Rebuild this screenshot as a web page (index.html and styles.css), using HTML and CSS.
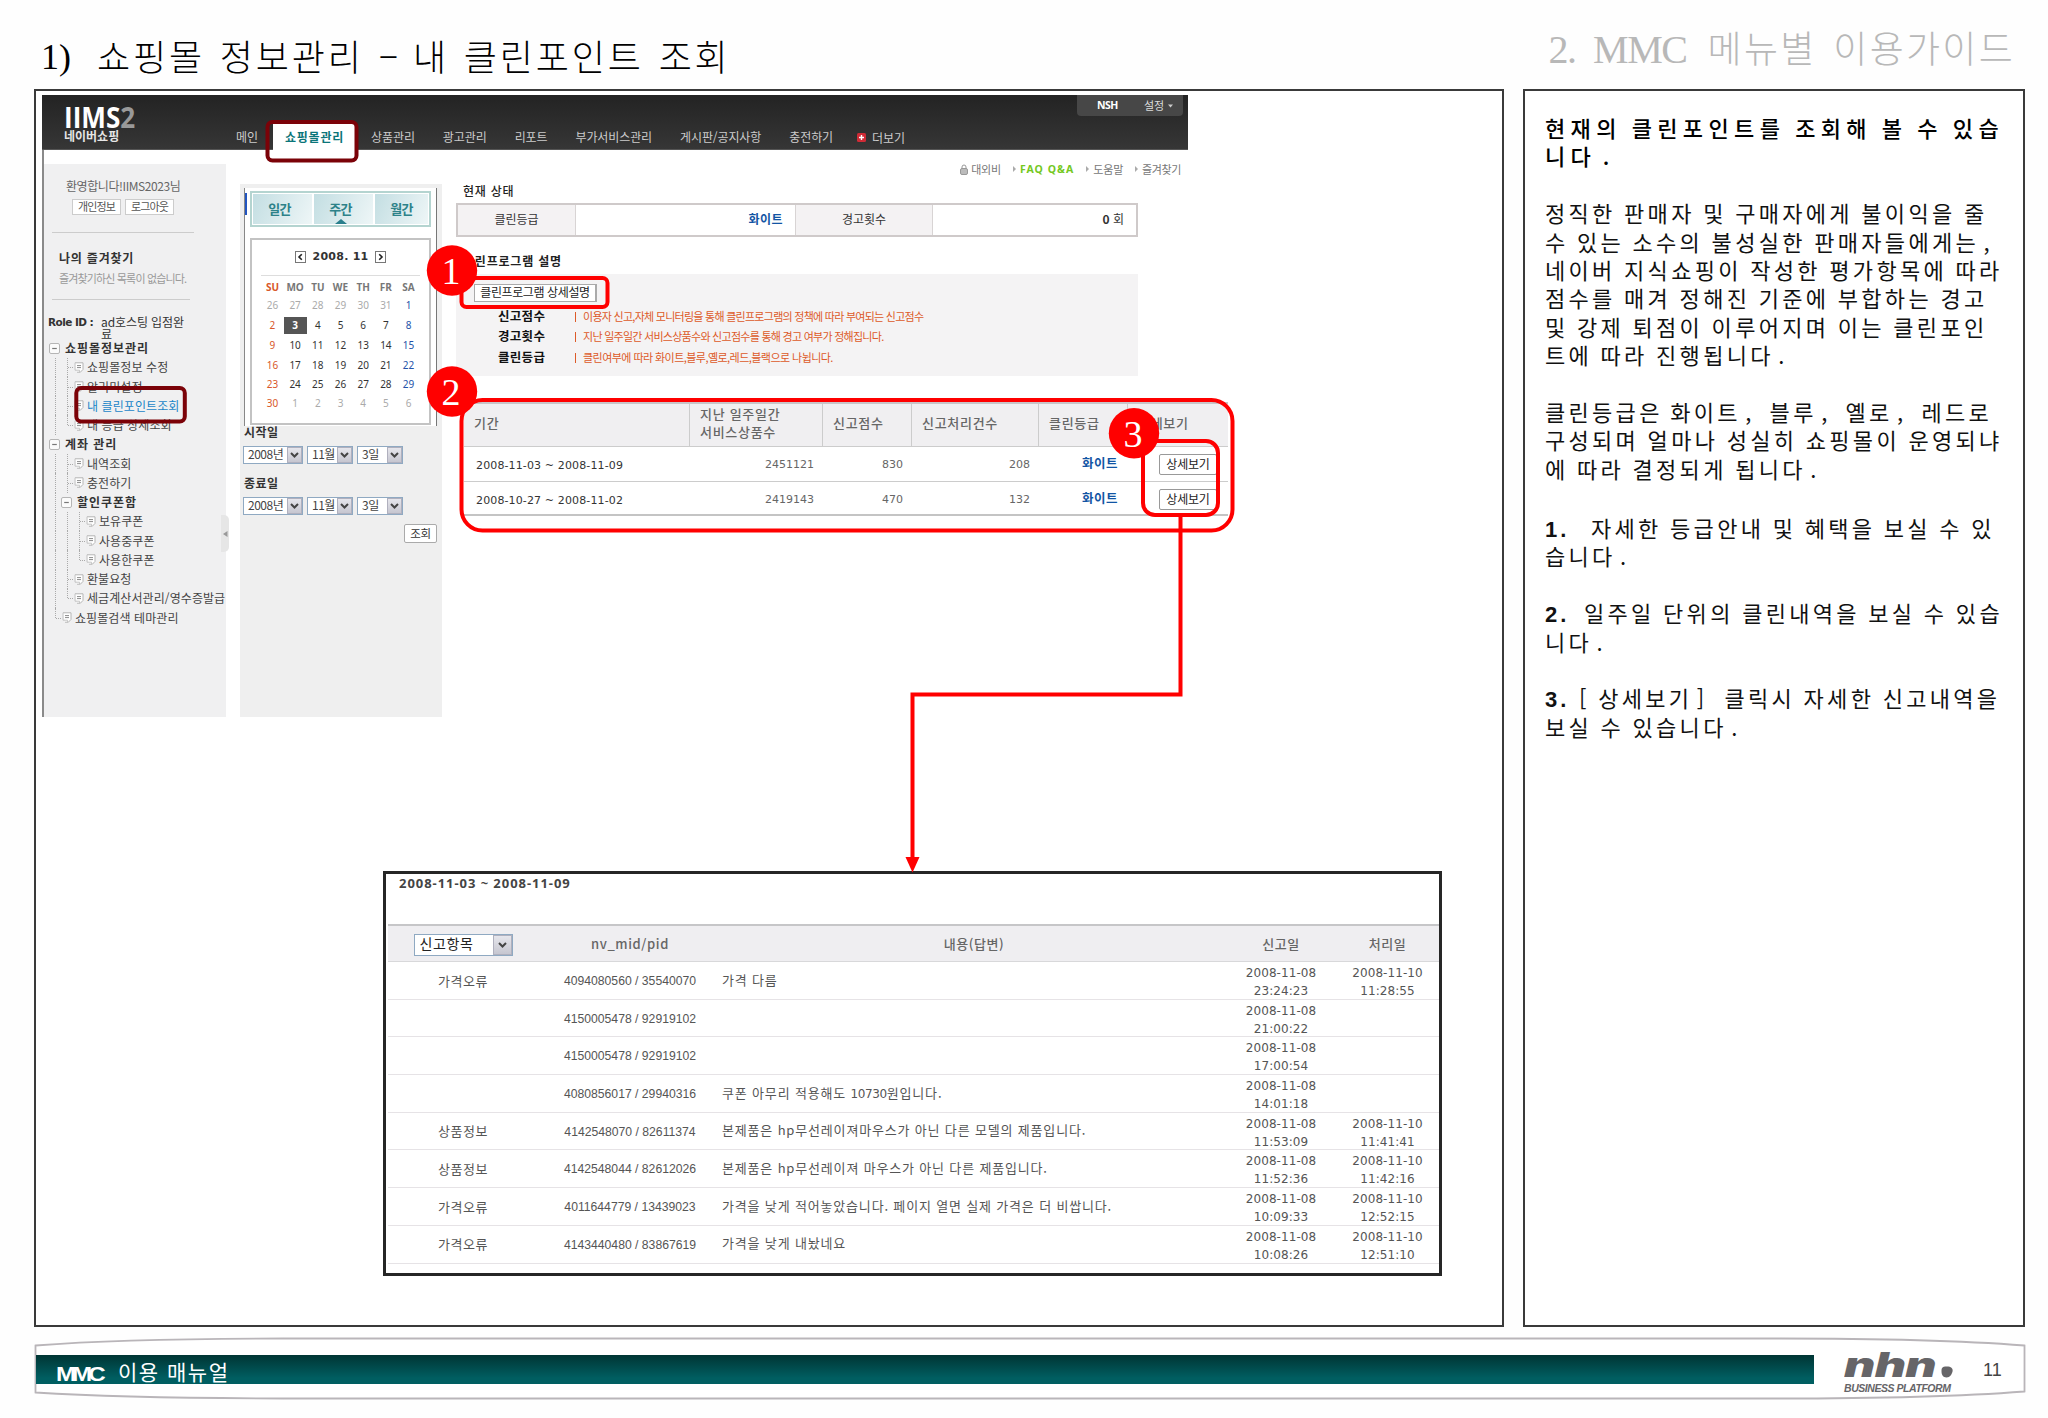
FILE: index.html
```html
<!DOCTYPE html>
<html lang="ko">
<head>
<meta charset="utf-8">
<title>MMC 이용 매뉴얼</title>
<link rel="stylesheet" href="styles.css">
</head>
<body>
<svg class="defs" width="0" height="0" aria-hidden="true">
  <symbol id="doc" viewBox="0 0 10 11"><path d="M1 .8h8v6.6L6.4 10.2H3" fill="#fff" stroke="#b4b4b4"/><path d="M1 .8v7.4h4.6V10" fill="none" stroke="#c4c4c4"/><path d="M3 3.6h4M3 5.6h4" stroke="#8a8a8a"/></symbol>
  <symbol id="minus" viewBox="0 0 11 11"><rect x=".5" y=".5" width="10" height="10" rx="1.5" fill="#fbfbfb" stroke="#b5b5b5"/><path d="M3.2 5.5h4.6" stroke="#777" stroke-width="1.2"/></symbol>
  <symbol id="chev" viewBox="0 0 9 6"><path d="M1 1l3.5 3.5L8 1" fill="none" stroke="#444" stroke-width="2"/></symbol>
</svg>
<div class="slide">
  <header class="titles">
    <h1><span class="num">1)</span>쇼핑몰 정보관리 <span class="dash">–</span> 내 클린포인트 조회</h1>
    <h2><span class="lat">2. MMC</span>메뉴별 이용가이드</h2>
  </header>
  <main class="panels">
    <section class="panel stage">
      <div class="console">
        <div class="topbar">
          <div class="brand"><b>IIMS<i>2</i></b><span>네이버쇼핑</span></div>
          <nav class="nav">
            <a>메인</a><a class="on">쇼핑몰관리</a><a>상품관리</a><a>광고관리</a><a>리포트</a><a>부가서비스관리</a><a>게시판/공지사항</a><a>충전하기</a>
            <a class="more"><svg width="9" height="9" viewBox="0 0 9 9"><rect width="9" height="9" rx="1.5" fill="#cf2b36"/><path d="M4.5 2v5M2 4.5h5" stroke="#fff" stroke-width="1.4"/></svg>더보기</a>
          </nav>
          <div class="account"><b>NSH</b><span>설정</span><svg width="5" height="4" viewBox="0 0 5 4"><path d="M0 .5h5L2.500 3.500z" fill="#ccc"/></svg></div>
        </div>
        <div class="body">
          <aside class="side">
            <p class="hello">환영합니다!IIMS2023님</p>
            <div class="mini"><span>개인정보</span><span>로그아웃</span></div>
            <hr>
            <p class="fav">나의 즐겨찾기</p>
            <p class="none">즐겨찾기하신 목록이 없습니다.</p>
            <hr class="second">
            <div class="role"><b>Role ID :</b><span>ad호스팅 입점완<br>료</span></div>
            <ul class="tree">
              <li class="grp"><svg class="mi"><use href="#minus"/></svg>쇼핑몰정보관리</li>
              <li><i class="v"></i><i class="t"></i><svg class="di"><use href="#doc"/></svg>쇼핑몰정보 수정</li>
              <li><i class="v"></i><i class="t"></i><svg class="di"><use href="#doc"/></svg>알리미설정</li>
              <li class="cur"><i class="v"></i><i class="t"></i><svg class="di"><use href="#doc"/></svg>내 클린포인트조회</li>
              <li><i class="v"></i><i class="l"></i><svg class="di"><use href="#doc"/></svg>내 등급 상세조회</li>
              <li class="grp"><svg class="mi"><use href="#minus"/></svg>계좌 관리</li>
              <li><i class="v"></i><i class="t"></i><svg class="di"><use href="#doc"/></svg>내역조회</li>
              <li><i class="v"></i><i class="t"></i><svg class="di"><use href="#doc"/></svg>충전하기</li>
              <li class="grp"><i class="v"></i><svg class="mi"><use href="#minus"/></svg>할인쿠폰함</li>
              <li><i class="v"></i><i class="v"></i><i class="t"></i><svg class="di"><use href="#doc"/></svg>보유쿠폰</li>
              <li><i class="v"></i><i class="v"></i><i class="t"></i><svg class="di"><use href="#doc"/></svg>사용중쿠폰</li>
              <li><i class="v"></i><i class="v"></i><i class="l"></i><svg class="di"><use href="#doc"/></svg>사용한쿠폰</li>
              <li><i class="v"></i><i class="t"></i><svg class="di"><use href="#doc"/></svg>환불요청</li>
              <li><i class="v"></i><i class="l"></i><svg class="di"><use href="#doc"/></svg>세금계산서관리/영수증발급</li>
              <li><i class="l"></i><svg class="di"><use href="#doc"/></svg>쇼핑몰검색 테마관리</li>
            </ul>
            <div class="handle"><svg width="5" height="6" viewBox="0 0 5 6"><path d="M4.500 0v6L0 3z" fill="#999"/></svg></div>
          </aside>
          <div class="period">
            <div class="widget">
              <div class="tabs"><span>일간</span><span class="sel">주간</span><span>월간</span></div>
              <div class="cal">
                <div class="month"><svg width="11" height="12" viewBox="0 0 11 12"><rect x=".5" y=".5" width="10" height="11" fill="#fff" stroke="#777"/><path d="M6.800 3.200L4 6l2.800 2.800" fill="none" stroke="#222" stroke-width="1.6"/></svg><b>2008. 11</b><svg width="11" height="12" viewBox="0 0 11 12"><rect x=".5" y=".5" width="10" height="11" fill="#fff" stroke="#777"/><path d="M4.200 3.200L7 6 4.200 8.800" fill="none" stroke="#222" stroke-width="1.6"/></svg></div>
                <div class="grid head"><b>SU</b><b>MO</b><b>TU</b><b>WE</b><b>TH</b><b>FR</b><b>SA</b></div>
                <div class="grid"><s>26</s><s>27</s><s>28</s><s>29</s><s>30</s><s>31</s><span>1</span></div>
                <div class="grid tall"><span>2</span><em>3</em><span>4</span><span>5</span><span>6</span><span>7</span><span>8</span></div>
                <div class="grid"><span>9</span><span>10</span><span>11</span><span>12</span><span>13</span><span>14</span><span>15</span></div>
                <div class="grid"><span>16</span><span>17</span><span>18</span><span>19</span><span>20</span><span>21</span><span>22</span></div>
                <div class="grid"><span>23</span><span>24</span><span>25</span><span>26</span><span>27</span><span>28</span><span>29</span></div>
                <div class="grid"><span>30</span><s>1</s><s>2</s><s>3</s><s>4</s><s>5</s><s>6</s></div>
              </div>
            </div>
            <p class="lbl">시작일</p>
            <div class="picks"><span class="dd y">2008년<i><svg><use href="#chev"/></svg></i></span><span class="dd">11월<i><svg><use href="#chev"/></svg></i></span><span class="dd">3일<i><svg><use href="#chev"/></svg></i></span></div>
            <p class="lbl end">종료일</p>
            <div class="picks"><span class="dd y">2008년<i><svg><use href="#chev"/></svg></i></span><span class="dd">11월<i><svg><use href="#chev"/></svg></i></span><span class="dd">3일<i><svg><use href="#chev"/></svg></i></span></div>
            <span class="go">조회</span>
          </div>
          <div class="content">
            <div class="util"><svg class="lock" width="8" height="11" viewBox="0 0 8 11"><path d="M2 5V3a2 2 0 0 1 4 0v2" fill="none" stroke="#999"/><rect x=".5" y="4.500" width="7" height="6" rx="1.500" fill="#bbb" stroke="#999"/></svg><span>대외비</span><i></i><b>FAQ Q&amp;A</b><i></i><span>도움말</span><i></i><span class="last">즐겨찾기</span></div>
            <p class="sec">현재 상태</p>
            <div class="state"><span class="k">클린등급</span><span class="val grade">화이트</span><span class="k">경고횟수</span><span class="val"><b>0</b> 회</span></div>
            <p class="sec prog">클린프로그램 설명</p>
            <div class="explain">
              <span class="detail">클린프로그램 상세설명</span>
              <dl>
                <dt>신고점수</dt><dd>이용자 신고,자체 모니터링을 통해 클린프로그램의 정책에 따라 부여되는 신고점수</dd>
                <dt>경고횟수</dt><dd>지난 일주일간 서비스상품수와 신고점수를 통해 경고 여부가 정해집니다.</dd>
                <dt>클린등급</dt><dd>클린여부에 따라 화이트,블루,옐로,레드,블랙으로 나뉩니다.</dd>
              </dl>
            </div>
            <div class="history">
              <div class="hr th"><span>기간</span><span>지난 일주일간<br>서비스상품수</span><span>신고점수</span><span>신고처리건수</span><span>클린등급</span><span>상세보기</span></div>
              <div class="hr"><span class="d">2008-11-03 ~ 2008-11-09</span><span class="n">2451121</span><span class="n">830</span><span class="n">208</span><span class="g">화이트</span><span><u>상세보기</u></span></div>
              <div class="hr"><span class="d">2008-10-27 ~ 2008-11-02</span><span class="n">2419143</span><span class="n">470</span><span class="n">132</span><span class="g">화이트</span><span><u>상세보기</u></span></div>
            </div>
          </div>
        </div>
      </div>
      <div class="popup">
        <p class="range">2008-11-03 ~ 2008-11-09</p>
        <div class="pr ph"><span><span class="dd big">신고항목<i><svg><use href="#chev"/></svg></i></span></span><span>nv_mid/pid</span><span>내용(답변)</span><span>신고일</span><span>처리일</span></div>
        <div class="pr"><span>가격오류</span><span class="id">4094080560 / 35540070</span><span class="msg">가격 다름</span><time>2008-11-08<br>23:24:23</time><time>2008-11-10<br>11:28:55</time></div>
        <div class="pr"><span></span><span class="id">4150005478 / 92919102</span><span></span><time>2008-11-08<br>21:00:22</time></div>
        <div class="pr"><span></span><span class="id">4150005478 / 92919102</span><span></span><time>2008-11-08<br>17:00:54</time></div>
        <div class="pr"><span></span><span class="id">4080856017 / 29940316</span><span class="msg">쿠폰 아무리 적용해도 <small>10730</small>원입니다.</span><time>2008-11-08<br>14:01:18</time></div>
        <div class="pr"><span>상품정보</span><span class="id">4142548070 / 82611374</span><span class="msg">본제품은 hp무선레이져마우스가 아닌 다른 모델의 제품입니다.</span><time>2008-11-08<br>11:53:09</time><time>2008-11-10<br>11:41:41</time></div>
        <div class="pr"><span>상품정보</span><span class="id">4142548044 / 82612026</span><span class="msg">본제품은 hp무선레이져 마우스가 아닌 다른 제품입니다.</span><time>2008-11-08<br>11:52:36</time><time>2008-11-10<br>11:42:16</time></div>
        <div class="pr"><span>가격오류</span><span class="id">4011644779 / 13439023</span><span class="msg">가격을 낮게 적어놓았습니다. 페이지 열면 실제 가격은 더 비쌉니다.</span><time>2008-11-08<br>10:09:33</time><time>2008-11-10<br>12:52:15</time></div>
        <div class="pr"><span>가격오류</span><span class="id">4143440480 / 83867619</span><span class="msg">가격을 낮게 내놨네요</span><time>2008-11-08<br>10:08:26</time><time>2008-11-10<br>12:51:10</time></div>
      </div>
    </section>
    <section class="panel notes">
      <p class="lead">현재의 클린포인트를 조회해 볼 수 있습<br>니다<span class="pt"> .</span></p>
      <p>정직한 판매자 및 구매자에게 불이익을 줄<br>수 있는 소수의 불성실한 판매자들에게는<span class="pt"> ,</span><br>네이버 지식쇼핑이 작성한 평가항목에 따라<br>점수를 매겨 정해진 기준에 부합하는 경고<br>및 강제 퇴점이 이루어지며 이는 클린포인<br>트에 따라 진행됩니다<span class="pt"> .</span></p>
      <p class="grades">클린등급은 화이트<span class="pt"> ,</span>  블루<span class="pt"> ,</span>  옐로<span class="pt"> ,</span>  레드로<br>구성되며 얼마나 성실히 쇼핑몰이 운영되냐<br>에 따라 결정되게 됩니다<span class="pt"> .</span></p>
      <p><b class="n1">1.</b>자세한 등급안내 및 혜택을 보실 수 있<br>습니다<span class="pt"> .</span></p>
      <p><b class="n2">2.</b>일주일 단위의 클린내역을 보실 수 있습<br>니다<span class="pt"> .</span></p>
      <p><b class="n3">3.</b>[ 상세보기<span class="pt"> ]</span>  클릭시 자세한 신고내역을<br>보실 수 있습니다<span class="pt"> .</span></p>
    </section>
  </main>
  <footer class="foot">
    <svg class="frame" width="1992" height="64" viewBox="0 0 1992 64"><path d="M1.500 9.500Q90 2.500 250 2.500H1745Q1900 2.500 1990.500 9.500V55.500Q1900 62.500 1745 62.500H250Q90 62 1.500 56.500Z" fill="#fff" stroke="#b9b5b9" stroke-width="1.800"/></svg>
    <div class="bar"><b>MMC</b><span>이용 매뉴얼</span></div>
    <div class="nhn"><div class="mark"><b>nhn</b><svg width="12" height="12" viewBox="0 0 12 12"><path d="M6 .5c4 0 6 2 5.600 4.500C11 8 9 11.500 5.500 11.500S.5 8.500.5 5.500.500.500 6 .500z" fill="#666568"/></svg></div><span>BUSINESS PLATFORM</span></div>
    <span class="page">11</span>
  </footer>
  <svg class="marks" width="2048" height="1000" viewBox="0 0 2048 1000">
    <g fill="none" stroke="#7b0208" stroke-width="4"><rect x="267.500" y="122" width="89" height="38.500" rx="5"/><rect x="76.300" y="388" width="108.500" height="33.500" rx="5"/></g>
    <g fill="none" stroke="#f00" stroke-width="4"><rect x="461.500" y="278" width="146" height="29" rx="5"/><rect x="461.500" y="400" width="771" height="130.500" rx="21"/><rect x="1143" y="441" width="75" height="74" rx="12"/><path d="M1180.500 517V694.500H912.500V860"/></g>
    <path d="M905.500 857h14L912.500 872.500z" fill="#f00"/>
    <g fill="#f00"><circle cx="452" cy="270.500" r="25.200"/><circle cx="452" cy="391.500" r="25.200"/><circle cx="1134" cy="433.200" r="25.200"/></g>
    <g class="digits"><text x="451" y="284">1</text><text x="451" y="405">2</text><text x="1133" y="447">3</text></g>
  </svg>
</div>
</body>
</html>
```
FILE: styles.css
```css
* { box-sizing: border-box; margin: 0; padding: 0; }
body { background: #fff; font-family: "Noto Sans CJK KR", sans-serif; color: #333; }
i, em { font-style: normal; }
s, u { text-decoration: none; }
ul { list-style: none; }
.defs { position: absolute; }
.slide { position: relative; width: 2048px; height: 1418px; padding: 0 23px 0 34px; overflow: hidden; white-space: nowrap; background: #fefefe; }

.titles { height: 89px; display: flex; justify-content: space-between; }
.titles h1, .titles h2 { font-weight: 300; }
.titles h1 { font-size: 36px; line-height: 50px; padding: 30px 0 0 7px; letter-spacing: 2.850px; word-spacing: 2px; color: #000; }
.titles .num { display: inline-block; width: 56px; font-family: "Liberation Serif", serif; font-size: 36px; letter-spacing: 0; transform: translateY(-2px); }
.titles .dash { letter-spacing: 0; }
.titles h2 { font-size: 37px; line-height: 50px; padding: 22px 10px 0 0; letter-spacing: 2.300px; word-spacing: 4px; color: #b8b8b8; }
.titles .lat { display: inline-block; width: 159px; font-family: "Liberation Serif", serif; font-size: 40px; letter-spacing: -1.500px; word-spacing: 9px; }

.panels { display: flex; gap: 19px; height: 1238px; }
.panel { border: 2px solid #3a3a3a; background: #fff; }
.stage { width: 1470px; }
.notes { width: 502px; padding: 22px 0 0 20px; font-size: 22px; line-height: 28.400px; color: #111; }
.notes p { font-weight: 400; letter-spacing: 3.300px; word-spacing: -1px; margin-bottom: 28.300px; white-space: pre; }
.notes .pt { word-spacing: -5px; }
.notes .lead { font-weight: 500; letter-spacing: 5.350px; word-spacing: -1.600px; color: #000; }
.notes .grades { margin-bottom: 31px; }
.notes .grades:first-line { word-spacing: -2px; }
.notes b { display: inline-block; font: 700 22px/20px "Liberation Sans", Arial, sans-serif; letter-spacing: 3px; }
.notes .n1 { width: 46px; }
.notes .n2 { width: 39px; }
.notes .n3 { width: 34px; }

.console { width: 1192px; height: 626px; padding: 4px 0 0; margin-left: 6px; font-size: 12px; }
.topbar { width: 1146px; height: 55px; display: flex; background: linear-gradient(#232323, #363636); border-bottom: 1px solid #555; }
.brand { width: 194px; padding: 9px 0 0 22px; color: #fff; }
.brand b { display: block; width: 90px; font: 700 29px/25px "Open Sans", sans-serif; letter-spacing: 0; transform: scaleX(.9); transform-origin: 0 0; }
.brand b i { color: #999; }
.brand span { display: block; font-weight: 700; font-size: 12px; line-height: 14px; color: #e6e6e6; }
.nav { display: flex; gap: 28px; height: 26px; line-height: 25px; margin-top: 29px; color: #ccc; letter-spacing: -.1px; }
.nav .on { background: #fff; color: #0b7579; font-weight: 700; padding: 0 12px; margin: 0 -13px; letter-spacing: .8px; }
.nav .more { display: flex; align-items: center; gap: 6px; margin-left: -4px; }
.account { width: 106px; height: 21px; margin: 0 5px 0 auto; padding-left: 20px; display: flex; align-items: center; background: #474747; border-radius: 0 0 4px 4px; color: #ddd; font-size: 11px; line-height: 19px; }
.account b { width: 47px; font-family: "Noto Sans", sans-serif; font-size: 10.500px; color: #fff; letter-spacing: -.5px; }
.account span { margin-right: 4px; }
.body { height: 567px; display: flex; border-left: 2px solid #8a8a8a; }

.side { position: relative; width: 182px; height: 553px; margin-top: 14px; padding: 12px 0 0; background: #f0f0f1; }
.hello { padding-left: 22px; line-height: 19px; font-size: 12px; color: #666; letter-spacing: -.42px; }
.mini { display: flex; gap: 4px; padding: 4px 0 0 28px; }
.mini span { width: 49px; height: 16px; background: #fff; border: 1px solid #ccc; font-size: 11px; line-height: 13px; text-align: center; color: #555; letter-spacing: -.900px; }
.side hr { border: 0; height: 1px; background: #ccc; margin: 17px 0 0 8px; width: 142px; }
.fav { padding-left: 15px; margin-top: 15px; line-height: 20px; font-weight: 700; letter-spacing: .8px; }
.none { padding-left: 15px; line-height: 20px; font-size: 11px; color: #999; letter-spacing: -.850px; }
.side hr.second { margin-top: 11px; width: 138px; }
.role { display: flex; margin-top: 16px; height: 22.400px; padding-left: 4px; line-height: 12px; }
.role b { width: 53px; font: 700 10.500px/13px "DejaVu Sans", sans-serif; letter-spacing: -.550px; }
.role span { letter-spacing: -.1px; }
.tree li { display: flex; align-items: center; height: 19.280px; padding-left: 5px; line-height: 18px; color: #444; letter-spacing: .08px; }
.tree i { position: relative; flex: none; width: 12px; height: 100%; }
.tree i::before { content: ""; position: absolute; left: 6px; top: 0; bottom: 0; border-left: 1px dotted #aaa; }
.tree .l::before { bottom: 50%; }
.tree .t::after, .tree .l::after { content: ""; position: absolute; left: 7px; right: 0; top: 50%; border-top: 1px dotted #aaa; }
.tree .grp { font-weight: 700; letter-spacing: .95px; color: #333; }
.tree .cur { color: #1b86c8; }
.mi { width: 11px; height: 11px; margin: 0 5px 0 0; flex: none; }
.di { width: 10px; height: 11px; margin: 0 3px 0 1px; flex: none; }
.handle { position: absolute; left: 177px; top: 351px; width: 8px; height: 37px; display: flex; align-items: center; justify-content: center; background: #e6e6e6; border-radius: 0 5px 5px 0; }

.period { width: 202px; height: 533px; margin: 34px 0 0 14px; padding: 4px 0 0 4px; background: #efefef; }
.widget { width: 193px; height: 238px; padding: 3px 0 0 5px; background: linear-gradient(#2255c0, #2255c0) 0 5px / 2px 22px no-repeat, #fff; border-right: 1px solid #777; border-left: 1px solid #888; }
.tabs { display: flex; gap: 2px; width: 181px; height: 36px; border: 2px solid #b4d4d0; padding: 1px; background: #fff; }
.tabs span { position: relative; flex: 1; font-size: 13px; font-weight: 700; line-height: 29px; text-align: center; color: #2d8289; letter-spacing: -.8px; background: linear-gradient(115deg, #c3dee2, #eef6f7); }
.tabs span:first-child, .tabs .sel { padding-right: 6px; }
.tabs .sel::after { content: ""; position: absolute; left: 50%; bottom: 0; margin-left: -9px; border: 6px solid transparent; border-top: 0; border-bottom: 5px solid #2a7f8c; }
.cal { width: 181px; height: 187px; margin-top: 11px; padding: 10px 9px 0; border: 2px solid #c3c3c3; background: #fff; }
.month { display: flex; justify-content: center; align-items: center; gap: 7px; height: 26px; padding-bottom: 12px; border-bottom: 1px solid #ddd; }
.month b { font: 700 11px/12px "DejaVu Sans", sans-serif; color: #333; letter-spacing: .25px; }
.grid { display: grid; grid-template-columns: repeat(7, 22.700px); justify-content: center; justify-items: center; height: 19.300px; line-height: 19px; font-family: "Noto Sans", sans-serif; font-size: 10px; color: #333; }
.grid.head { height: 20px; line-height: 22px; font-size: 10px; color: #777; }
.grid.head b { font-weight: 700; font-family: "Open Sans", sans-serif; }
.grid s { color: #aaa; }
.grid.tall { height: 21px; line-height: 21px; }
.grid > :first-child { color: #d8582a; }
.grid > s:first-child { color: #aaa; }
.grid > span:last-child { color: #2452a8; }
.grid em { width: 23px; height: 17px; margin-top: 2px; line-height: 17px; text-align: center; background: #555; color: #fff; font-weight: 700; }
.lbl { height: 14px; line-height: 12px; font-weight: 700; letter-spacing: .4px; }
.lbl.end { margin-top: 12px; padding-top: 1px; }
.picks { display: flex; gap: 4px; margin: 6px 0 0 -1px; }
.lbl.end + .picks { margin-top: 7px; }
.dd { position: relative; display: flex; justify-content: space-between; width: 46px; height: 18px; border: 1px solid #8fa9c2; background: #fff; padding-left: 4px; font-size: 12px; line-height: 14px; letter-spacing: -.5px; color: #444; }
.dd.y { width: 60px; }
.dd i { width: 15px; height: 100%; display: flex; align-items: center; justify-content: center; background: linear-gradient(#e6e6ec, #c6c6d0); border: 1px solid #b0b0be; }
.dd svg { width: 9px; height: 6px; }
.go { display: block; width: 33px; height: 19px; margin: 9px 0 0 160px; border: 1px solid #aaa; border-radius: 2px; background: #fff; font-size: 11.500px; line-height: 16px; text-align: center; letter-spacing: -.3px; }

.content { width: 775px; margin-left: 14px; flex: none; padding-top: 9px; }
.util { display: flex; align-items: center; width: 725px; height: 20px; justify-content: flex-end; font-size: 11px; color: #777; letter-spacing: -.2px; line-height: 19px; }
.util .lock { margin-right: 3px; }
.util b { font: 700 10.500px/19px "Noto Sans", sans-serif; color: #74c81e; letter-spacing: 1.050px; }
.util i { margin: 0 4px 0 12px; border: 3px solid transparent; border-left-color: #aaa; border-right: 0; }
.util .last { letter-spacing: -.4px; }
.sec { padding-left: 7px; margin-top: 2px; height: 20px; line-height: 19px; font-weight: 500; letter-spacing: .75px; color: #222; }
.state { display: grid; grid-template-columns: 118px 220px 137px 1fr; width: 682px; height: 34px; margin-top: 2px; border: 2px solid #cfcaca; line-height: 27px; }
.state .k { background: #f4f2f3; border-right: 1px solid #d8d4d4; text-align: center; }
.state .k + .val { border-right: 1px solid #d8d4d4; }
.state .val { text-align: right; padding-right: 12px; }
.state .val:last-child { border-right: 0; }
.state .grade, .history .g { color: #1255a4; font-weight: 700; letter-spacing: .5px; }
.prog { margin-top: 14px; font-weight: 700; font-size: 12px; letter-spacing: .8px; }
.explain { width: 682px; height: 102px; margin-top: 3px; padding: 10px 0 0 18px; background: #f4f3f4; }
.detail { display: block; width: 123px; height: 18px; border: 1px solid #aaa; border-right-width: 2px; background: #fff; text-align: center; line-height: 14px; letter-spacing: -.4px; color: #222; }
.explain dl { display: grid; grid-template-columns: 77px 1fr; margin: 4px 0 0 24px; line-height: 20.400px; }
.explain dt { font-weight: 700; font-size: 12.500px; color: #111; letter-spacing: .3px; }
.explain dd { font-size: 11px; color: #dd5a28; letter-spacing: -.73px; }
.explain dd:last-child { letter-spacing: -.55px; }
.explain dd::before { content: ""; display: inline-block; width: 1px; height: 10px; margin-right: 7px; background: #dd5a28; vertical-align: -1px; }
.history { width: 764px; margin: 26px 0 0 8px; }
.hr { display: grid; grid-template-columns: 226px 133px 89px 127px 89px 100px; height: 34.500px; line-height: 34px; border-bottom: 1px solid #ccc; }
.hr:last-child { border-bottom: 2px solid #c4c4c4; }
.hr.th { height: 45px; border-top: 2px solid #c8c5c8; background: #f0eff1; align-items: center; font-size: 13px; font-weight: 500; line-height: 18px; color: #666; letter-spacing: .7px; }
.hr.th span { height: 100%; padding: 0 0 4px 10px; border-right: 1px solid #ccc; display: flex; align-items: center; }
.hr.th span:last-child { border: 0; }
.hr .d { font: 11px/38px "DejaVu Sans", sans-serif; padding-left: 12px; letter-spacing: .13px; }
.hr .n { font: 11px/36px "DejaVu Sans", sans-serif; text-align: right; padding-right: 9px; color: #666; letter-spacing: 0; }
.hr .g { text-align: right; padding-right: 10px; font-size: 12.500px; line-height: 32px; }
.hr u { display: block; width: 58px; height: 21px; margin: 7px 0 0 31px; border: 1px solid #999; border-radius: 2px; background: #fff; line-height: 18px; text-align: center; letter-spacing: -.2px; color: #222; }

.popup { width: 1059px; height: 405px; margin: 154px 0 0 347px; padding: 0 0 0 2px; border: 3px solid #262626; background: #fff; }
.range { height: 50px; padding-left: 11px; font: 700 13px/19px "Noto Sans", sans-serif; letter-spacing: .95px; color: #444; }
.pr { display: grid; grid-template-columns: 150px 184px 504px 110px 1fr; align-items: center; justify-items: center; height: 37.700px; border-bottom: 1px solid #e6e3e6; font-size: 13px; line-height: 17px; letter-spacing: .6px; color: #555; }
.ph { height: 38px; border-top: 2px solid #c6c6c8; border-bottom: 1px solid #d8d8da; background: #efeef1; font-weight: 500; color: #666; }
.pr > span:first-child { margin-top: -2px; }
.ph > span:first-child { margin-top: 2px; }
.pr .id { font: 12.200px/16px "Liberation Sans", Arial, sans-serif; letter-spacing: 0; }
.pr .msg { justify-self: start; letter-spacing: .83px; margin-top: -4px; }
.pr small { font: 12px "DejaVu Sans", sans-serif; letter-spacing: -.4px; }
.pr time { font: 12px/18px "DejaVu Sans", sans-serif; letter-spacing: .06px; text-align: center; padding-top: 2px; }
.dd.big { width: 99px; height: 22px; padding-left: 5px; font-size: 14px; font-weight: 400; line-height: 17px; letter-spacing: .6px; color: #222; }
.dd.big i { width: 19px; }

.foot { position: relative; display: flex; align-items: flex-start; height: 64px; margin-top: 9px; }
.frame { position: absolute; left: 0; top: 0; }
.foot > div, .foot > .page { position: relative; }
.bar { width: 1778px; height: 29px; margin: 19px 0 0 2px; padding-left: 20px; display: flex; background: linear-gradient(#003534, #005e61 80%); color: #fff; line-height: 32px; }
.bar b { width: 62px; font: 700 21px/38px "Liberation Sans", Arial, sans-serif; letter-spacing: -3.500px; transform: scaleX(1.150); transform-origin: 0 0; }
.bar span { font-size: 21px; font-weight: 400; letter-spacing: 1.500px; line-height: 32px; }
.nhn { width: 110px; margin: 14px 0 0 30px; color: #666568; }
.mark { display: flex; align-items: flex-end; height: 29px; }
.mark b { width: 97px; font: italic 900 34px/29px Inter, sans-serif; transform: scaleX(1.420); transform-origin: 0 0; letter-spacing: -.5px; flex: none; }
.mark svg { flex: none; margin-bottom: 1px; }
.nhn span { display: block; font: italic 700 10.500px/19px "Liberation Sans", Arial, sans-serif; letter-spacing: -.45px; }
.page { margin: 22px 0 0 29px; font: 18px/24px "Liberation Sans", Arial, sans-serif; color: #444; }

.marks { position: absolute; left: 0; top: 0; }
.digits { font: 38px "Liberation Serif", serif; fill: #fff; text-anchor: middle; }
```
